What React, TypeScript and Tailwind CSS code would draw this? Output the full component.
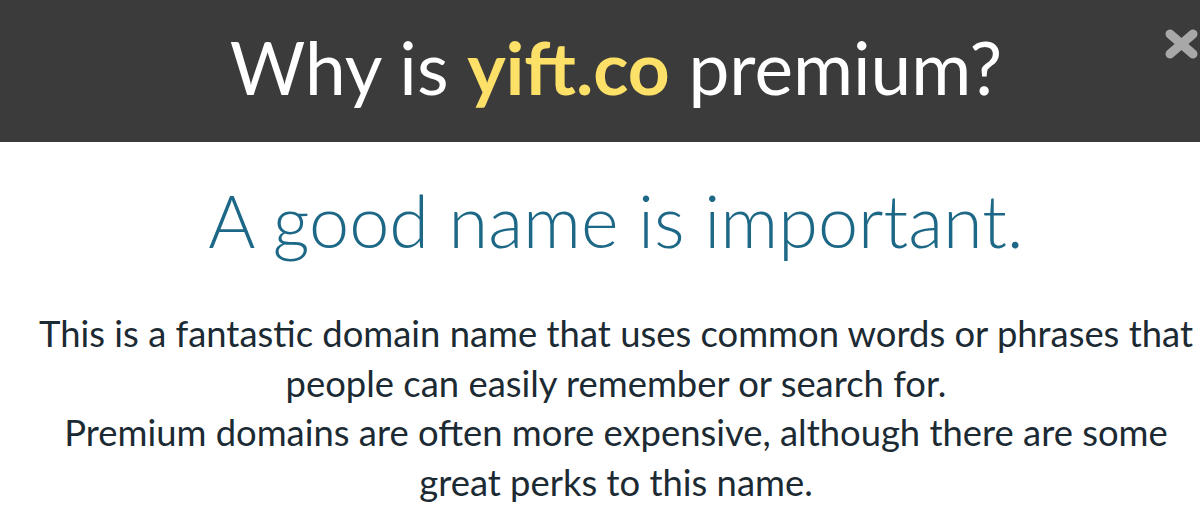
export default function App() {
  return (
    <div
      className="w-[1200px] h-[513px] overflow-hidden bg-white"
      style={{ fontFamily: "Lato, 'Open Sans', sans-serif" }}
    >
      <div className="relative h-[142px] bg-[#3b3b3b] pl-[32px] flex items-center justify-center">
        <h1 className="text-[73px] leading-none text-white font-normal whitespace-nowrap -mt-[8px]">
          Why is <span className="font-bold text-[#fde068]">yift.co</span> premium?
        </h1>
        {/* close button, partly cut by the window edge */}
        <svg
          className="absolute left-[1164px] top-[28px]"
          width="36"
          height="32"
          viewBox="0 0 36 32"
        >
          <path
            d="M6 6 L29 26 M29 6 L6 26"
            stroke="#a8a8a8"
            strokeWidth="9"
            strokeLinecap="round"
          />
        </svg>
      </div>
      <div className="pl-[32px] text-center">
        <h2 className="mt-[42px] text-[72px] leading-none font-light text-[#1d6886] whitespace-nowrap">
          A good name is important.
        </h2>
        <div className="mt-[53px] text-[36.4px] leading-[49.5px] text-[#1c2a33] whitespace-nowrap">
          <p>This is a fantastic domain name that uses common words or phrases that</p>
          <p>people can easily remember or search for.</p>
          <p>Premium domains are often more expensive, although there are some</p>
          <p>great perks to this name.</p>
        </div>
      </div>
    </div>
  );
}
